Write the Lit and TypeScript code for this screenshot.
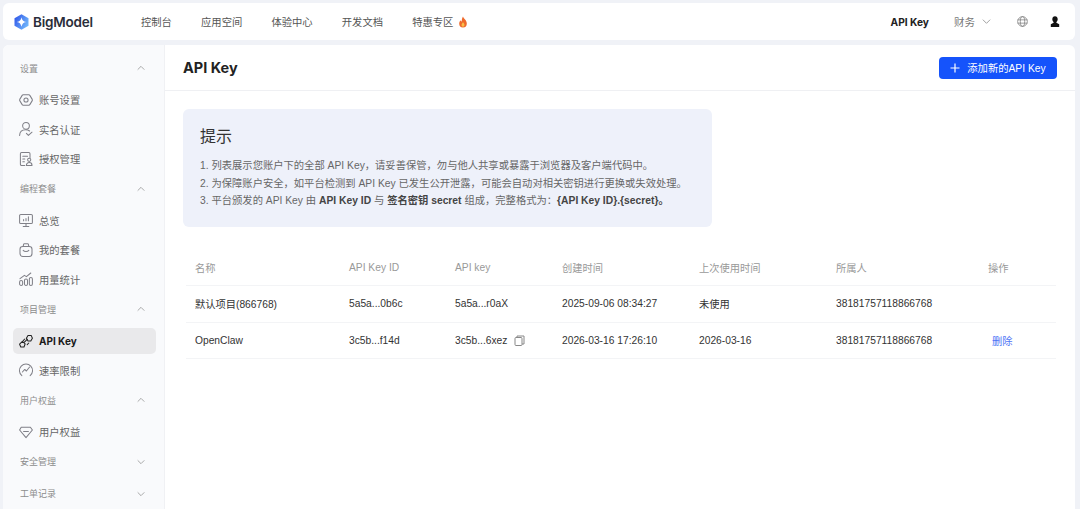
import { LitElement, html, css, svg } from "lit";
import { customElement } from "lit/decorators.js";

const sans = css`"Liberation Sans", "Noto Sans CJK SC", sans-serif`;

// sidebar icons, all on a 20x20 box
const icons: Record<string, unknown> = {
  account: svg`<path d="M6.500 3.500h7a1.500 1.500 0 0 1 1.300.7l3 5a1.500 1.500 0 0 1 0 1.600l-3 5a1.500 1.500 0 0 1-1.300.7h-7a1.500 1.500 0 0 1-1.300-.7l-3-5a1.500 1.500 0 0 1 0-1.600l3-5a1.500 1.500 0 0 1 1.300-.7Z"/><circle cx="10" cy="10" r="2.600"/>`,
  person: svg`<circle cx="10" cy="6" r="4.200"/><path d="M2 18c.2-4.200 3.200-7 7.500-7 2 0 3.700.5 5 1.500"/><path d="m10.500 15.500 2.500 2.500 4.500-4"/>`,
  auth: svg`<path d="M8.500 18H4.500a1.500 1.500 0 0 1-1.500-1.500v-13A1.500 1.500 0 0 1 4.500 2h9A1.500 1.500 0 0 1 15 3.500V8"/><path d="M6 6.500h6M6 10h2.500M6 13.500h2"/><circle cx="14" cy="11" r="2"/><path d="M10.500 18c0-2.200 1.400-3.500 3.500-3.500s3.500 1.300 3.500 3.500Z"/>`,
  overview: svg`<rect x="2" y="3" width="16" height="11.500" rx="1.500"/><path d="M6.500 18h7M10 14.500V18M7 11V9.500M10 11V8M13 11V6"/>`,
  plan: svg`<rect x="2.500" y="5.500" width="15" height="12.500" rx="3.500"/><path d="M6.500 5.500 7 3a1 1 0 0 1 1-.8h4a1 1 0 0 1 1 .8l.5 2.500M6.500 10.500c1.500 1.800 5.500 1.800 7 0"/>`,
  usage: svg`<rect x="2" y="12" width="3.800" height="6" rx="1.900"/><rect x="8.100" y="10" width="3.800" height="8" rx="1.900"/><rect x="14.200" y="8" width="3.800" height="10" rx="1.900"/><path d="M2.500 9.500 8 5.500l2.500 1.500L16 2.500"/>`,
  key: svg`<path d="M5.500 10.500 9 13.500 7.500 17.500h-4L2 14Z"/><path d="M12.500 3 16.500 3 18 6.500 16 10 12.500 10 10.500 6.500Z"/><path d="m8.500 7.500-2 2M13.500 12.500l-2 2M8 11.500l3.500-3.500"/>`,
  rate: svg`<path d="M4.800 17A8.200 8.200 0 1 1 15.200 17"/><path d="m5.500 12.500 3-3.200 2 2 4-5"/>`,
  rights: svg`<path d="M4 4h11.500M15.500 4l2.500 3.500-8 9.500-8-9.500L4 4"/><path d="M7 9.500h6"/>`,
};

const icon = (name: string) =>
  html`<svg class="ico" viewBox="0 0 20 20">${icons[name]}</svg>`;

const chevron = (up: boolean) => html`<svg class="chev" viewBox="0 0 12 12">
  <path d=${up ? "M2 8l4-4 4 4" : "M2 4l4 4 4-4"}></path>
</svg>`;

const groups = [
  {
    title: "设置",
    open: true,
    items: [
      { label: "账号设置", icon: "account" },
      { label: "实名认证", icon: "person" },
      { label: "授权管理", icon: "auth" },
    ],
  },
  {
    title: "编程套餐",
    open: true,
    items: [
      { label: "总览", icon: "overview" },
      { label: "我的套餐", icon: "plan" },
      { label: "用量统计", icon: "usage" },
    ],
  },
  {
    title: "项目管理",
    open: true,
    items: [
      { label: "API Key", icon: "key", active: true },
      { label: "速率限制", icon: "rate" },
    ],
  },
  {
    title: "用户权益",
    open: true,
    items: [{ label: "用户权益", icon: "rights" }],
  },
  { title: "安全管理", open: false, items: [] },
  { title: "工单记录", open: false, items: [] },
];

const rows = [
  {
    name: "默认项目(866768)",
    id: "5a5a...0b6c",
    key: "5a5a...r0aX",
    created: "2025-09-06 08:34:27",
    used: "未使用",
    owner: "38181757118866768",
    del: false,
  },
  {
    name: "OpenClaw",
    id: "3c5b...f14d",
    key: "3c5b...6xez",
    created: "2026-03-16 17:26:10",
    used: "2026-03-16",
    owner: "38181757118866768",
    del: true,
  },
];

@customElement("app-root")
export class AppRoot extends LitElement {
  static styles = css`
    :host {
      display: block;
      width: 1080px;
      height: 509px;
      overflow: hidden;
      background: #f0f2f7;
      font-family: ${sans};
      font-size: 10.3px;
      color: #333;
    }
    .page {
      display: flex;
      flex-direction: column;
      gap: 5px;
      padding: 3px 5px 0 3px;
      height: 506px;
    }

    /* top bar */
    .top {
      flex: none;
      height: 37px;
      display: flex;
      align-items: center;
      background: #fff;
      border-radius: 6px;
      padding: 0 15px 0 11px;
    }
    .logo {
      display: flex;
      align-items: center;
      gap: 4px;
      width: 127px;
      font-family: Inter, ${sans};
      font-size: 13.500px;
      font-weight: 600;
      color: #2a2e3a;
      letter-spacing: -0.2px;
    }
    .logo svg {
      width: 15px;
      height: 16px;
    }
    .nav {
      display: flex;
      gap: 29.200px;
      color: #555;
    }
    .nav span {
      display: flex;
      align-items: center;
      gap: 5px;
    }
    .nav svg {
      width: 10px;
      height: 12px;
    }
    .top-right {
      margin-left: auto;
      display: flex;
      align-items: center;
      color: #777;
      font-size: 10.500px;
    }
    .top-right b {
      color: #222;
      font-family: Inter, ${sans};
      font-size: 10.200px;
      font-weight: 700;
      margin-right: 25px;
    }
    .top-right .chev {
      margin: 0 0 0 6px;
      width: 11px;
      height: 11px;
    }
    .globe {
      width: 11px;
      height: 11px;
      margin: 0 1px 0 25px;
    }
    .user {
      width: 10px;
      height: 11px;
      margin-left: 21px;
    }

    /* body */
    .body {
      flex: 1;
      display: flex;
      min-height: 0;
      border-radius: 6px 6px 0 0;
      overflow: hidden;
      background: #fff;
    }
    .side {
      flex: none;
      width: 162px;
      box-sizing: border-box;
      padding: 9.500px 8px 0 10px;
      background: #f9fafc;
      border-right: 1px solid #f0f1f4;
    }
    .group {
      display: flex;
      align-items: center;
      justify-content: space-between;
      height: 27px;
      margin-bottom: 5px;
      padding: 0 10px 0 7px;
      color: #8d8d8d;
      font-size: 9px;
    }
    .item {
      display: flex;
      align-items: center;
      gap: 5px;
      height: 26px;
      margin-bottom: 3.500px;
      padding: 0 5px;
      border-radius: 5px;
      color: #666;
    }
    .item.active {
      background: #e9e9eb;
      color: #1a1a1a;
      font-family: Inter, ${sans};
      font-weight: 700;
      font-size: 10px;
    }
    .item.active .ico {
      stroke: #222;
    }
    .ico {
      width: 16px;
      height: 16px;
      fill: none;
      stroke: #808088;
      stroke-width: 1.300;
      stroke-linecap: round;
      stroke-linejoin: round;
      flex: none;
    }
    .chev {
      width: 10px;
      height: 10px;
      fill: none;
      stroke: #999;
      stroke-width: 1;
    }

    /* main */
    .main {
      flex: 1;
      min-width: 0;
    }
    .head {
      display: flex;
      align-items: center;
      justify-content: space-between;
      height: 45px;
      padding: 0 18px;
      border-bottom: 1px solid #eff0f3;
    }
    h1 {
      margin: 0;
      font-family: Inter, ${sans};
      font-size: 14.500px;
      font-weight: 700;
      color: #222;
    }
    .add {
      display: flex;
      align-items: center;
      justify-content: center;
      gap: 7px;
      width: 118px;
      height: 22px;
      border: 0;
      border-radius: 4px;
      background: #1553fb;
      color: #fff;
      font: inherit;
    }
    .add svg {
      width: 10px;
      height: 10px;
      stroke: #fff;
      stroke-width: 1.200;
    }
    .tip {
      box-sizing: border-box;
      width: 529px;
      height: 118px;
      margin: 18px 0 0 18px;
      padding: 17px 17px;
      border-radius: 6px;
      background: #eef1fa;
      color: #666;
      font-size: 10.300px;
      line-height: 17.500px;
    }
    .tip h2 {
      margin: 0 0 9px;
      font-size: 16px;
      font-weight: 400;
      line-height: 22px;
      color: #333;
    }
    .tip b {
      color: #444;
    }
    .table {
      margin: 22px 19px 0 21px;
    }
    .row {
      box-sizing: border-box;
      display: grid;
      grid-template-columns: 154px 106px 107px 137px 137px 152px 1fr;
      align-items: center;
      height: 36.500px;
      padding-left: 9px;
      border-bottom: 1px solid #f3f4f6;
      font-size: 10.250px;
    }
    .row.th {
      color: #999;
      height: 37px;
    }
    .row .copy {
      width: 11px;
      height: 11px;
      margin-left: 7px;
      vertical-align: -2px;
      fill: none;
      stroke: #888;
    }
    .del {
      color: #4f74f6;
      padding-left: 4px;
    }
  `;

  render() {
    return html`
      <div class="page">
        <header class="top">
          <div class="logo">
            <svg viewBox="0 0 15 16">
              <defs>
                <linearGradient id="lg" x1="0" y1="0" x2="1" y2="0.600">
                  <stop offset="0" stop-color="#2b4fe8"></stop>
                  <stop offset="1" stop-color="#6fb4fa"></stop>
                </linearGradient>
              </defs>
              <path d="M7.500.3 14.500 4.200v7.600L7.500 15.700.5 11.800V4.200Z" fill="url(#lg)"></path>
              <path d="M7.500 3.200c.6 3 1.700 4.100 4.700 4.800-3 .7-4.100 1.800-4.700 4.800-.6-3-1.700-4.100-4.700-4.800 3-.7 4.100-1.800 4.700-4.800Z" fill="#fff"></path>
            </svg>
            BigModel
          </div>
          <nav class="nav">
            <span>控制台</span>
            <span>应用空间</span>
            <span>体验中心</span>
            <span>开发文档</span>
            <span>特惠专区
              <svg viewBox="0 0 10 12">
                <path d="M5 .5c.5 2 3.800 3.500 3.800 7A3.800 4 0 0 1 1.200 7.500c0-1.600.8-2.500 1.500-3.300.2.800.5 1.200 1 1.400C3.800 3.800 4 2 5 .5Z" fill="#ee6a2c"></path>
                <path d="M5 6c.3 1 1.500 1.500 1.500 3A1.500 1.800 0 0 1 3.500 9C3.500 7.800 4.700 7.200 5 6Z" fill="#f9c04a"></path>
              </svg>
            </span>
          </nav>
          <div class="top-right">
            <b>API Key</b>
            <span>财务</span>
            ${chevron(false)}
            <svg class="globe" viewBox="0 0 12 12" fill="none" stroke="#777" stroke-width=".8">
              <circle cx="6" cy="6" r="5.300"></circle>
              <ellipse cx="6" cy="6" rx="2.400" ry="5.300"></ellipse>
              <path d="M.8 4.200h10.400M.8 7.800h10.400"></path>
            </svg>
            <svg class="user" viewBox="0 0 10 11">
              <path d="M5 .3C3.400.3 2.300 1.500 2.300 3.200c0 1.200.5 2.200 1.300 2.700v.8L.8 8.200V11h8.400V8.200L6.400 6.700v-.8c.8-.5 1.300-1.500 1.300-2.700C7.700 1.500 6.600.3 5 .3Z" fill="#111"></path>
            </svg>
          </div>
        </header>

        <div class="body">
          <aside class="side">
            ${groups.map(
              (g) => html`
                <div class="group"><span>${g.title}</span>${chevron(g.open)}</div>
                ${g.items.map(
                  (i) => html`
                    <div class="item ${(i as { active?: boolean }).active ? "active" : ""}">
                      ${icon(i.icon)}<span>${i.label}</span>
                    </div>
                  `
                )}
              `
            )}
          </aside>

          <main class="main">
            <div class="head">
              <h1>API Key</h1>
              <button class="add">
                <svg viewBox="0 0 10 10"><path d="M5 .5v9M.5 5h9"></path></svg>
                添加新的API Key
              </button>
            </div>

            <section class="tip">
              <h2>提示</h2>
              <div>1. 列表展示您账户下的全部 API Key，请妥善保管，勿与他人共享或暴露于浏览器及客户端代码中。</div>
              <div>2. 为保障账户安全，如平台检测到 API Key 已发生公开泄露，可能会自动对相关密钥进行更换或失效处理。</div>
              <div>3. 平台颁发的 API Key 由 <b>API Key ID</b> 与 <b>签名密钥 secret</b> 组成，完整格式为：<b>{API Key ID}.{secret}。</b></div>
            </section>

            <div class="table">
              <div class="row th">
                <span>名称</span><span>API Key ID</span><span>API key</span><span>创建时间</span>
                <span>上次使用时间</span><span>所属人</span><span>操作</span>
              </div>
              ${rows.map(
                (r) => html`
                  <div class="row">
                    <span>${r.name}</span>
                    <span>${r.id}</span>
                    <span>${r.key}${r.del
                      ? html`<svg class="copy" viewBox="0 0 11 11">
                          <rect x="1" y="2.500" width="7" height="8" rx="1"></rect>
                          <path d="M3 2.500V1h7v8H8"></path>
                        </svg>`
                      : ""}</span>
                    <span>${r.created}</span>
                    <span>${r.used}</span>
                    <span>${r.owner}</span>
                    <span class="del">${r.del ? "删除" : ""}</span>
                  </div>
                `
              )}
            </div>
          </main>
        </div>
      </div>
    `;
  }
}
